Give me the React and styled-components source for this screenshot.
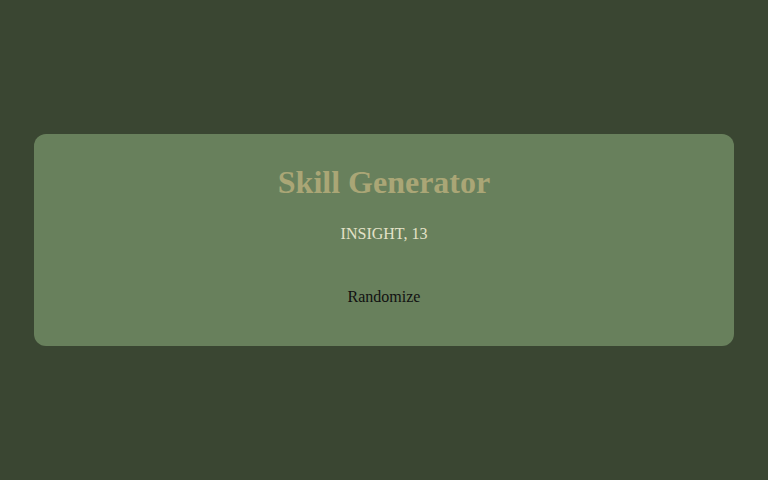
import React, { useState } from 'react';
import styled, { createGlobalStyle } from 'styled-components';

const skills = ['ATHLETICS', 'INSIGHT', 'STEALTH', 'ARCANA', 'PERCEPTION', 'HISTORY'];

const GlobalStyle = createGlobalStyle`
  html, body {
    margin: 0;
    padding: 0;
  }
  body {
    background-color: #3a4632;
    font-family: "Liberation Serif", "Times New Roman", serif;
  }
`;

const Page = styled.div`
  min-height: 100vh;
  display: flex;
  align-items: center;
  justify-content: center;
  padding: 0 34px;
  box-sizing: border-box;
`;

const Card = styled.div`
  width: 100%;
  background-color: #68805c;
  border-radius: 12px;
  padding: 30px 20px 40px;
  box-sizing: border-box;
  display: flex;
  flex-direction: column;
  align-items: center;
`;

const Title = styled.h1`
  margin: 0;
  font-size: 32px;
  color: #aaa676;
`;

const Result = styled.p`
  margin: 24px 0 0;
  font-size: 16px;
  color: #e4e2c8;
`;

const RandomButton = styled.button`
  margin-top: 45px;
  background: none;
  border: none;
  padding: 0;
  font-family: inherit;
  font-size: 16px;
  color: #111;
  cursor: pointer;
`;

const App = () => {
  const [skill, setSkill] = useState({ name: 'INSIGHT', value: 13 });

  const randomize = () => {
    setSkill({
      name: skills[Math.floor(Math.random() * skills.length)],
      value: Math.floor(Math.random() * 20) + 1,
    });
  };

  return (
    <>
      <GlobalStyle />
      <Page>
        <Card>
          <Title>Skill Generator</Title>
          <Result>{skill.name}, {skill.value}</Result>
          <RandomButton onClick={randomize}>Randomize</RandomButton>
        </Card>
      </Page>
    </>
  );
};

export default App;
